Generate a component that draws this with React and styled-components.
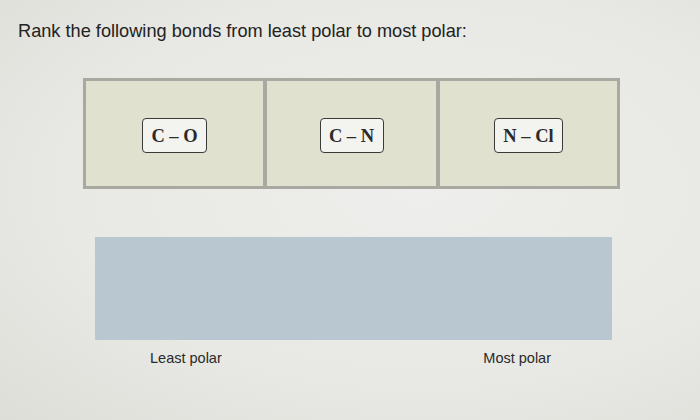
import React from 'react';
import styled, { createGlobalStyle } from 'styled-components';

const GlobalStyle = createGlobalStyle`
  html, body {
    margin: 0;
    padding: 0;
    background: #e9e9e5;
  }
  body {
    font-family: 'Liberation Sans', Arial, sans-serif;
    color: #1e1e1e;
  }
`;

const bonds = ['C – O', 'C – N', 'N – Cl'];

export default function App() {
  return (
    <>
      <GlobalStyle />
      <Page>
        <Prompt>Rank the following bonds from least polar to most polar:</Prompt>
        <Choices>
          {bonds.map((b) => (
            <Slot key={b}>
              <Tile>{b}</Tile>
            </Slot>
          ))}
        </Choices>
        <Answer>
          <DropZone />
          <Scale>
            <span>Least polar</span>
            <span>Most polar</span>
          </Scale>
        </Answer>
      </Page>
    </>
  );
}

const Page = styled.main`
  width: 700px;
  height: 420px;
  box-sizing: border-box;
  padding: 20px 0 0 18px;
  background: radial-gradient(ellipse at 60% 45%, #eeeeec 0%, #e8e8e4 60%, #dedeD9 100%);
`;

const Prompt = styled.h1`
  margin: 0;
  font-size: 18.2px;
  font-weight: 400;
  line-height: 22px;
  color: #222;
`;

const Choices = styled.div`
  margin: 36px 0 0 65px;
  width: 537px;
  height: 111px;
  box-sizing: border-box;
  display: grid;
  grid-template-columns: 177px 173px 1fr;
  border: 3px solid #a9a9a2;
  background: #e1e1d0;
`;

const Slot = styled.div`
  display: flex;
  align-items: center;
  justify-content: center;
  & + & {
    border-left: 4px solid #a9a9a2;
  }
`;

const Tile = styled.div`
  padding: 6px 8px 5px;
  min-width: 46px;
  text-align: center;
  border: 1.5px solid #3a3a3a;
  border-radius: 4px;
  background: #f3f3ef;
  font-family: 'Liberation Serif', 'Times New Roman', serif;
  font-weight: 700;
  font-size: 18.5px;
  line-height: 22px;
  color: #2a2a2a;
  white-space: nowrap;
  margin-top: 4px;
`;

const Answer = styled.section`
  margin: 48px 0 0 77px;
  width: 517px;
`;

const DropZone = styled.div`
  height: 103px;
  background: #b9c8d0;
`;

const Scale = styled.div`
  display: flex;
  justify-content: space-between;
  padding: 10px 61px 0 55px;
  font-size: 14.5px;
  line-height: 16px;
  color: #2a2a2a;
`;
